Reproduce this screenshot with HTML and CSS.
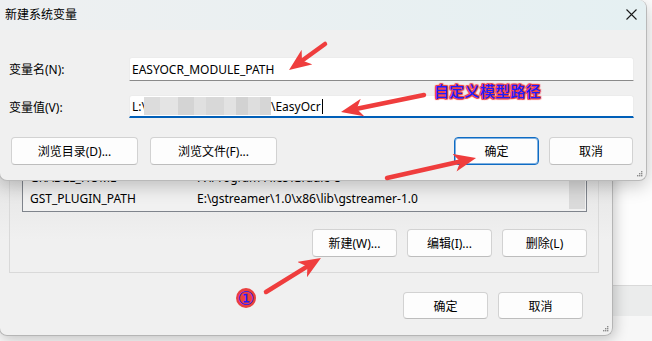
FILE: index.html
```html
<!DOCTYPE html>
<html lang="zh-CN">
<head>
    <meta charset="UTF-8">
    <meta name="viewport" content="width=device-width, initial-scale=1.0">
    <title>新建系统变量</title>
    <link rel="stylesheet" href="styles.css">
</head>
<body>
<div class="desk">

    <!-- 环境变量窗口(后面) -->
    <div class="win back">
        <div class="group">
            <div class="list">
                <div class="rows">
                    <div class="row"><span class="k">GRADLE_HOME</span><span>F:\Program Files\Gradle-8</span></div>
                    <div class="row"><span class="k">GST_PLUGIN_PATH</span><span>E:\gstreamer\1.0\x86\lib\gstreamer-1.0</span></div>
                </div>
                <div class="scroll"></div>
            </div>
            <div class="btns">
                <button class="btn">新建(W)...</button>
                <button class="btn">编辑(I)...</button>
                <button class="btn">删除(L)</button>
            </div>
        </div>
        <div class="foot">
            <button class="btn">确定</button>
            <button class="btn">取消</button>
        </div>
        <svg class="grip" width="7" height="7" viewBox="0 0 7 7"><rect x="5" y="1" width="1.4" height="1.4"/><rect x="3" y="3" width="1.4" height="1.4"/><rect x="5" y="3" width="1.4" height="1.4"/><rect x="1" y="5" width="1.4" height="1.4"/><rect x="3" y="5" width="1.4" height="1.4"/><rect x="5" y="5" width="1.4" height="1.4"/></svg>
    </div>

    <!-- 新建系统变量对话框 -->
    <div class="win front">
        <div class="title">
            <span>新建系统变量</span>
            <svg width="11" height="11" viewBox="0 0 11 11"><path d="M0.5 0.5 L10.5 10.5 M10.5 0.5 L0.5 10.5" stroke="#1a1a1a" stroke-width="1.1" fill="none"/></svg>
        </div>
        <div class="form">
            <div class="field">
                <label>变量名(N):</label>
                <div class="input">EASYOCR_MODULE_PATH</div>
            </div>
            <div class="field">
                <label>变量值(V):</label>
                <div class="input focus">L:\<span class="blur"></span>\EasyOcr<span class="caret"></span></div>
            </div>
            <div class="actions">
                <button class="btn wide">浏览目录(D)...</button>
                <button class="btn wide">浏览文件(F)...</button>
                <button class="btn main">确定</button>
                <button class="btn">取消</button>
            </div>
        </div>
        <svg class="grip" width="7" height="7" viewBox="0 0 7 7"><rect x="5" y="1" width="1.4" height="1.4"/><rect x="3" y="3" width="1.4" height="1.4"/><rect x="5" y="3" width="1.4" height="1.4"/><rect x="1" y="5" width="1.4" height="1.4"/><rect x="3" y="5" width="1.4" height="1.4"/><rect x="5" y="5" width="1.4" height="1.4"/></svg>
    </div>

    <!-- 标注 -->
    <svg class="marks" width="652" height="341" viewBox="0 0 652 341">
        <defs>
            <marker id="head" markerUnits="userSpaceOnUse" markerWidth="23" markerHeight="18" refX="7" refY="9" orient="auto">
                <path d="M0 0 L22 9 L0 18 L6 9 Z" fill="#ef3d3d"/>
            </marker>
        </defs>
        <g stroke="#ef3d3d" stroke-width="4.5" stroke-linecap="round" marker-end="url(#head)">
            <line x1="325" y1="44" x2="301.2" y2="61.2"/>
            <line x1="424" y1="95" x2="355.7" y2="109"/>
            <line x1="387" y1="178" x2="461.4" y2="161.3"/>
            <line x1="266" y1="292" x2="308.2" y2="265.9"/>
        </g>
    </svg>
    <div class="note">自定义模型路径</div>
    <div class="num">①</div>
</div>
</body>
</html>
```

FILE: styles.css
```css
body {
    margin: 0;
    font-family: "Noto Sans", "Noto Sans CJK SC", sans-serif;
    font-size: 12px;
    color: #000;
}
.desk {
    position: relative;
    width: 652px;
    height: 341px;
    overflow: hidden;
    background: linear-gradient(#fdfdfd 0 285px, #d9d9d9 285px 286px, #ebecec 286px 316px, #f7f7f7 316px);
}
.win {
    position: absolute;
    box-sizing: border-box;
    background-color: #f0f0f0;
}
.grip {
    position: absolute;
    right: 3px;
    bottom: 3px;
    fill: #8c8c8c;
}

/* 后面的窗口 */
.back {
    left: -1px;
    top: 150px;
    width: 614px;
    height: 186px;
    border: 1px solid #b5b5b5;
    border-top: none;
    border-radius: 0 0 8px 8px;
    background: linear-gradient(#e6e6e6 30px, #f0f0f0 90px);
    box-shadow: 2px 3px 14px rgba(0, 0, 0, 0.22);
}
.group {
    margin: 0 13px 0 9px;
    padding: 0 11px 15px 12px;
    border: 1px solid #d9d9d9;
    border-top: none;
}
.list {
    display: flex;
    height: 62px;
    box-sizing: border-box;
    border: 1px solid #7f848c;
    border-top: none;
    background-color: #f1f1f1;
}
.rows {
    flex: 1;
    padding-top: 17px;
}
.row {
    display: flex;
    height: 21px;
    line-height: 21px;
    padding-left: 7px;
    white-space: nowrap;
}
.row .k {
    width: 167px;
}
.scroll {
    width: 16px;
    margin: 0 1px 2px 0;
    background-color: #dadada;
}
.btns {
    display: flex;
    justify-content: flex-end;
    gap: 10px;
    margin-top: 17px;
}
.foot {
    display: flex;
    justify-content: flex-end;
    gap: 10px;
    padding: 19px 29px 0 0;
}
.foot .btn {
    height: 27px;
}

/* 按钮 */
.btn {
    width: 85px;
    height: 28px;
    padding: 0;
    background-color: #fdfdfd;
    border: 1px solid #d2d2d2;
    border-bottom-color: #bdbdbd;
    border-radius: 4px;
    font-family: "Noto Sans", "Noto Sans CJK SC", sans-serif;
    font-size: 12px;
    color: #000;
}
.btn.wide {
    width: 127px;
}
.btn.main {
    border: 1px solid #0f6cc4;
    box-shadow: inset 0 0 0 1px #7fb0e0;
}

/* 新建系统变量对话框 */
.front {
    left: -1px;
    top: 0;
    width: 648px;
    height: 181px;
    border: 1px solid #b9b9b9;
    border-top: none;
    border-radius: 0 8px 8px 8px;
    box-shadow: 0 5px 18px rgba(0, 0, 0, 0.22);
}
.title {
    display: flex;
    justify-content: space-between;
    align-items: center;
    height: 30px;
    padding: 0 9px 2px 5px;
    box-sizing: border-box;
    border-radius: 0 8px 0 0;
    background: linear-gradient(90deg, #eef0f1, #e5f0f2);
}
.form {
    padding: 27px 12px 0 9px;
}
.field {
    display: flex;
    align-items: center;
    margin-bottom: 14px;
}
.field label {
    width: 120px;
}
.input {
    flex: 1;
    display: flex;
    align-items: center;
    height: 24px;
    box-sizing: border-box;
    padding-left: 2px;
    background-color: #fff;
    border: 1px solid #ececec;
    border-bottom-color: #8a8a8a;
    border-radius: 3px 3px 0 0;
    white-space: nowrap;
}
.input.focus {
    height: 23px;
    border-bottom: 2px solid #005fb8;
}
.blur {
    display: inline-block;
    width: 127px;
    height: 18px;
    margin-left: -2px;
    background: linear-gradient(90deg, #dcdcdc 0 16px, #e4e4e4 16px 34px, #d4d4d4 34px 50px, #e0e0e0 50px 62px, #d8d8d8 62px 80px, #e2e2e2 80px 92px, #d2d2d2 92px 104px, #dedede 104px 116px, #d6d6d6 116px);
}
.caret {
    display: inline-block;
    width: 1px;
    height: 15px;
    margin-left: 1px;
    background-color: #000;
}
.actions {
    display: flex;
    gap: 12px;
    margin: 19px 1px 0 2px;
}
.actions .main {
    margin-left: auto;
}
.actions .main + .btn {
    margin-left: -2px;
    width: 84px;
}

/* 标注 */
.marks {
    position: absolute;
    left: 0;
    top: 0;
    pointer-events: none;
}
.note {
    position: absolute;
    left: 434px;
    top: 80px;
    font-family: "Noto Sans CJK SC", sans-serif;
    font-size: 15px;
    font-weight: 500;
    letter-spacing: 0.3px;
    color: #1d1dff;
    text-shadow: 1px 0 0 #f04545, -1px 0 0 #f04545, 0 1px 0 #f04545, 0 -1px 0 #f04545, 1px 1px 1px #f04545, -1px -1px 1px #f04545, 1px -1px 1px #f04545, -1px 1px 1px #f04545;
}
.num {
    position: absolute;
    left: 236px;
    top: 288px;
    width: 20px;
    height: 20px;
    border-radius: 50%;
    background-color: #ea4040;
    color: #1d1dff;
    font-family: "DejaVu Sans", sans-serif;
    font-size: 19px;
    line-height: 20px;
    text-align: center;
}
```
